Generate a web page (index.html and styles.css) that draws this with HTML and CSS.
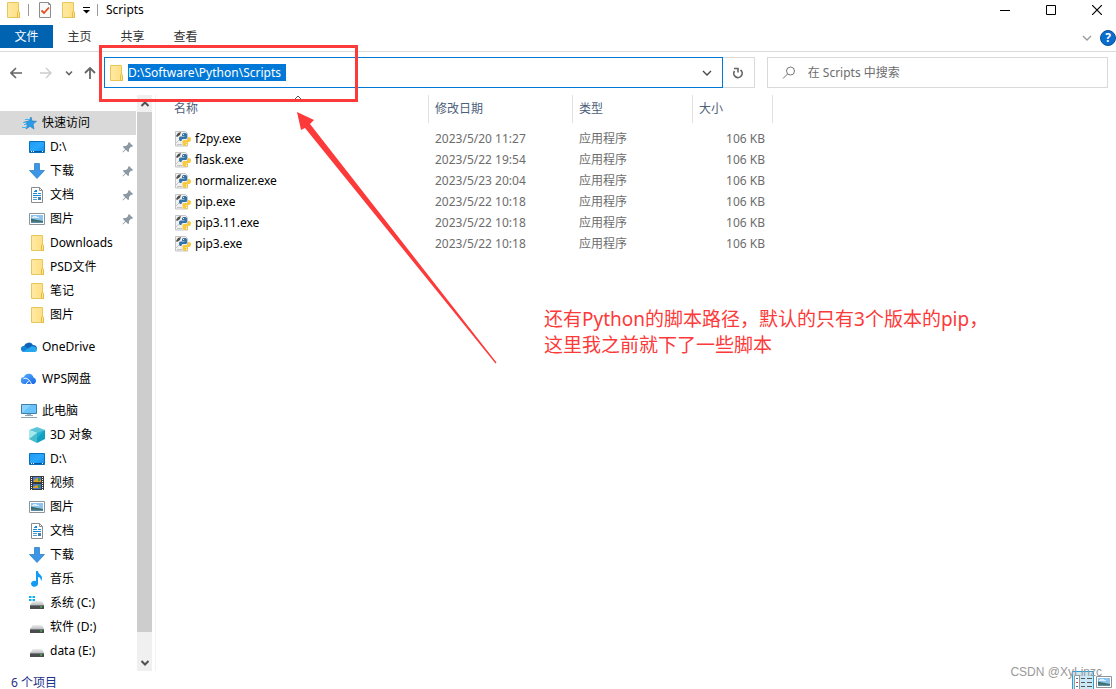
FILE: index.html
```html
<!DOCTYPE html>
<html lang="zh-CN">
  <head>
    <meta charset="UTF-8" />
    <meta name="viewport" content="width=device-width, initial-scale=1.0" />
    <title>Scripts</title>
    <link rel="stylesheet" href="styles.css" />
  </head>
  <body>
    <!-- 图标 -->
    <svg class="sprite" aria-hidden="true">
      <defs>
        <linearGradient id="blue" x1="0" y1="0" x2="1" y2="1">
          <stop offset="0" stop-color="#1b9bf5" />
          <stop offset="0.5" stop-color="#2aa8ff" />
          <stop offset="1" stop-color="#0d8ff0" />
        </linearGradient>
        <linearGradient id="gold" x1="0" y1="0" x2="1" y2="0">
          <stop offset="0" stop-color="#ffe9a2" />
          <stop offset="1" stop-color="#ffdf82" />
        </linearGradient>
        <linearGradient id="cloud" x1="0" y1="0" x2="1" y2="1">
          <stop offset="0" stop-color="#58b4ff" />
          <stop offset="1" stop-color="#1463e8" />
        </linearGradient>
        <linearGradient id="metal" x1="0" y1="0" x2="0" y2="1">
          <stop offset="0" stop-color="#eeeeee" />
          <stop offset="1" stop-color="#b9bdc0" />
        </linearGradient>
      </defs>
      <symbol id="folder" viewBox="0 0 16 16">
        <path d="M2.5.5h11v11l1 1v3h-12z" fill="url(#gold)" stroke="#e8c65c" />
        <path d="M12.5 15.5v-5l1-1.5 1 1.5v5z" fill="#ffe48e" stroke="#e3bb45" />
      </symbol>
      <symbol id="star" viewBox="0 0 16 16">
        <path d="M10 2l1 4 4.500.3-3.500 2.700 1 5-4-2.700-4 2.700 1.500-4.500L3.500 7l4.500-1z" fill="#2b9be8" stroke="#1678c2" stroke-width=".6" />
        <path d="M4 4.500h5M2 7.500h4M3 9.500h3M1 12.500h5" stroke="#49b2f2" />
      </symbol>
      <symbol id="desktop" viewBox="0 0 16 16">
        <path d="M.5 2.500h15v11H.5z" fill="url(#blue)" stroke="#0a6fbd" />
        <path d="M1 12.500h14" stroke="#06569b" />
        <path d="M2 12.500h1M4 12.500h1M13 12.500h1" stroke="#fff" />
      </symbol>
      <symbol id="download" viewBox="0 0 16 16">
        <path d="M5.500.5h5v7h5L8 15.500.5 7.500h5z" fill="#3b97e5" stroke="#2878c2" stroke-width=".7" />
      </symbol>
      <symbol id="doc" viewBox="0 0 16 16">
        <path d="M2.500.5h8l3 3v12h-11z" fill="#fff" stroke="#8b8b8b" />
        <path d="M10.500.5v3h3" fill="none" stroke="#8b8b8b" />
        <path d="M6 3.500h2M5 4.500h3M4 6.500h4M9 6.500h3M4 8.500h8" stroke="#1e88d8" />
        <path d="M4 10.500h4M4 12.500h4" stroke="#4f9ed4" />
        <path d="M9 10h3v3H9z" fill="#3d82b0" />
      </symbol>
      <symbol id="picture" viewBox="0 0 16 16">
        <path d="M.5 2.500h15v11H.5z" fill="#fff" stroke="#8f9499" />
        <path d="M2 4h12v8H2z" fill="#8cc3ef" />
        <path d="M4 5.500h4M3 6.500h7" stroke="#d9efff" />
        <path d="M2 7.500l4 1 8 1.500v2H2z" fill="#3c6d68" />
        <path d="M2 10.500l12 .5v1H2z" fill="#5d8ea8" />
      </symbol>
      <symbol id="onedrive" viewBox="0 0 16 16">
        <path d="M0 10.500A3.500 3.500 0 013 7a5 5 0 019-1 4 4 0 014 4z" fill="#0e62b8" />
        <path d="M0 10.500A3.500 3.500 0 013.500 7L11 12l-8 1A3 3 0 010 10.500z" fill="#1283d8" />
        <path d="M2 13l8-5.500c3-.8 6 .5 6 3A2.500 2.500 0 0113.500 13z" fill="#29a7ec" />
      </symbol>
      <symbol id="wps" viewBox="0 0 16 16">
        <path d="M3.500 13A3.500 3.500 0 013 6a5 5 0 019.500.5A3.500 3.500 0 0113 13z" fill="url(#cloud)" />
        <path d="M2.500 7.500c4-1 6 1.500 8 5.500M5 13l3-3.500" fill="none" stroke="#fff" />
      </symbol>
      <symbol id="pc" viewBox="0 0 16 16">
        <path d="M.5 1.500h15v9H.5z" fill="#69c3fb" stroke="#3f7fa8" />
        <path d="M1 10V2h9z" fill="#8bd3ff" />
        <path d="M6 11h4v1.500H6z" fill="#9eb4c4" />
        <path d="M0 14.500h16M4 12.500h8" stroke="#8aa3b5" />
      </symbol>
      <symbol id="cube" viewBox="0 0 16 16">
        <path d="M8 0l8 3-8 3-8-3z" fill="#5cc5d8" />
        <path d="M0 3l8 3v10l-8-4z" fill="#a4e8ec" />
        <path d="M16 3L8 6v10l8-4z" fill="#10a0c0" />
        <path d="M0 12l8-6v10z" fill="#48bccc" />
        <path d="M16 3l-8 8V6z" fill="#22b5d2" />
      </symbol>
      <symbol id="video" viewBox="0 0 16 16">
        <path d="M1 1h14v14H1z" fill="#3b3b3b" />
        <path d="M4 2h8v5H4z" fill="#597ed0" />
        <path d="M4 9h8v5H4z" fill="#4775c5" />
        <path d="M5 5l3-2 4 2v2H5zM4 12l4-2 2 3H4z" fill="#d8a32b" />
        <path d="M9 3h2v3H9zM9 10h2v3H9z" fill="#3f9652" />
        <path d="M2.500 2v13M13.500 2v13" stroke="#fff" stroke-dasharray="1 1" />
      </symbol>
      <symbol id="music" viewBox="0 0 16 16">
        <path d="M7 0h2c0 3 4 4 4 7 0 2-1 3-1 3 0-3-1.500-4-3-4v6.500A3.500 3 0 117 10z" fill="#129bf3" />
      </symbol>
      <symbol id="drive" viewBox="0 0 16 16">
        <path d="M4 6h9l2 4H1z" fill="url(#metal)" />
        <path d="M1 10h14v4H1z" fill="#4a4d4f" />
        <path d="M1 10.500h14" stroke="#777" />
        <path d="M11 12h2" stroke="#39e639" />
      </symbol>
      <symbol id="windrive" viewBox="0 0 16 16">
        <use href="#drive" />
        <path d="M0 1h2.500v2H0zM3.500 1H6v2H3.500zM0 4h2.500v2H0zM3.500 4H6v2H3.500z" fill="#10adef" />
      </symbol>
      <symbol id="pin" viewBox="0 0 12 12">
        <path d="M7 1l4 4-1 1-1-.3L7 8v2.500L6 11 3.800 8.800 1 11.500l-.5-.5 2.700-2.800L1 6l.5-1H4l2.300-2L6 2z" fill="#8c98a2" />
      </symbol>
      <symbol id="python" viewBox="0 0 16 16">
        <path d="M.5.5h10l2 2v12.500H.5z" fill="#f1f1f1" stroke="#c4c4c4" />
        <path d="M1 5l2-3 3-1-1 3-3 2z" fill="#4e4e4e" />
        <path d="M1 12l3-3M2 13.500h5" stroke="#c4c4c4" />
        <path d="M7 3.500C7 2.500 8 2 9.500 2S12 2.500 12 3.500v3c0 1-.8 1.500-1.500 1.500H8C7 8 6.500 8.800 6.500 10H5.500C4.300 10 4 8.800 4 7.500S4.500 5.500 5.500 5.500H9.500V5H7z" fill="#3572a5" />
        <path d="M13 6h1c1.300 0 2 1 2 2.500S15.300 11 14 11h-3.500v.5H13V13c0 1-1 2-2.500 2S7.500 14.300 7.500 13v-2.500C7.500 9.500 8.300 9 9.200 9H11.500C12.500 9 13 8.200 13 7.200z" fill="#f7ca3e" />
        <circle cx="8.500" cy="3.500" r=".6" fill="#fff" />
        <circle cx="11.500" cy="13.300" r=".6" fill="#fff" />
      </symbol>
      <symbol id="chevron" viewBox="0 0 10 10">
        <path d="M1 3l4 4 4-4" fill="none" stroke="currentColor" stroke-width="1.300" />
      </symbol>
      <symbol id="scroll-up" viewBox="0 0 10 10">
        <path d="M1.500 7L5 3.500 8.500 7" fill="none" stroke="currentColor" stroke-width="2" />
      </symbol>
      <symbol id="scroll-down" viewBox="0 0 10 10">
        <path d="M1.500 3L5 6.500 8.500 3" fill="none" stroke="currentColor" stroke-width="2" />
      </symbol>
    </svg>

    <!-- 标题栏 -->
    <header class="titlebar">
      <svg class="icon"><use href="#folder" /></svg>
      <span class="divider"></span>
      <svg class="icon" viewBox="0 0 16 16">
        <path d="M2.500.5h9l2 2v13h-11z" fill="#f8f8f8" stroke="#8d8d8d" />
        <path d="M11.500.5v2h2" fill="none" stroke="#8d8d8d" />
        <path d="M4.500 8.500L7 11l5-5.500" fill="none" stroke="#e0501f" stroke-width="1.800" />
      </svg>
      <svg class="icon"><use href="#folder" /></svg>
      <svg class="caret" viewBox="0 0 7 8">
        <path d="M0 1.500h7" stroke="#000" />
        <path d="M0 4h7L3.500 7.500z" />
      </svg>
      <span class="divider"></span>
      <h1>Scripts</h1>
      <div class="window-buttons">
        <button aria-label="最小化">
          <svg viewBox="0 0 10 10"><path d="M0 5.500h10" stroke="#000" /></svg>
        </button>
        <button aria-label="最大化">
          <svg viewBox="0 0 10 10"><path d="M.5.5h9v9h-9z" fill="none" stroke="#000" /></svg>
        </button>
        <button aria-label="关闭">
          <svg viewBox="0 0 10 10"><path d="M0 0l10 10M10 0L0 10" stroke="#000" stroke-width="1.200" /></svg>
        </button>
      </div>
    </header>

    <!-- 菜单 -->
    <div class="tabs">
      <button class="tab active">文件</button>
      <button class="tab">主页</button>
      <button class="tab">共享</button>
      <button class="tab">查看</button>
      <div class="tabs-right">
        <button aria-label="展开功能区"><svg class="arrow"><use href="#chevron" /></svg></button>
        <button class="help" aria-label="帮助">?</button>
      </div>
    </div>

    <!-- 地址栏 -->
    <div class="toolbar">
      <div class="history">
        <button class="back" aria-label="后退">
          <svg viewBox="0 0 12 12"><path d="M12 6H1M6 1L1 6l5 5" fill="none" stroke="currentColor" stroke-width="1.600" /></svg>
        </button>
        <button class="forward" aria-label="前进">
          <svg viewBox="0 0 12 12"><path d="M0 6h11M6 1l5 5-5 5" fill="none" stroke="currentColor" stroke-width="1.400" /></svg>
        </button>
        <button class="recent" aria-label="最近位置">
          <svg viewBox="0 0 12 12"><path d="M3 4.500l3 3 3-3" fill="none" stroke="currentColor" stroke-width="1.600" /></svg>
        </button>
        <button class="up" aria-label="上移">
          <svg viewBox="0 0 12 12"><path d="M6 12V1M1 6l5-5 5 5" fill="none" stroke="currentColor" stroke-width="1.800" /></svg>
        </button>
      </div>
      <div class="address">
        <div class="address-box">
          <svg class="icon"><use href="#folder" /></svg>
          <input class="path" type="text" aria-label="地址" value="D:\Software\Python\Scripts" />
          <button class="history-open" aria-label="以前的位置"><svg class="arrow"><use href="#chevron" /></svg></button>
          <div class="mark"></div>
        </div>
        <button class="refresh" aria-label="刷新">
          <svg viewBox="0 0 12 12">
            <path d="M8.500 3A4.200 4.200 0 112.500 4" fill="none" stroke="#666" stroke-width="1.700" />
            <path d="M2 1.500h4v4" fill="none" stroke="#666" stroke-width="1.600" />
          </svg>
        </button>
      </div>
      <div class="search">
        <svg viewBox="0 0 14 14">
          <circle cx="8.500" cy="5" r="4" fill="none" stroke="#777" />
          <path d="M5.500 8L1 12.500" stroke="#777" />
        </svg>
        <input type="text" aria-label="搜索" placeholder="在 Scripts 中搜索" />
      </div>
    </div>

    <main>
      <!-- 导航窗格 -->
      <nav class="sidebar">
        <a class="root selected" href="#"><svg class="icon"><use href="#star" /></svg>快速访问</a>
        <a href="#"><svg class="icon"><use href="#desktop" /></svg>D:\<svg class="pin"><use href="#pin" /></svg></a>
        <a href="#"><svg class="icon"><use href="#download" /></svg>下载<svg class="pin"><use href="#pin" /></svg></a>
        <a href="#"><svg class="icon"><use href="#doc" /></svg>文档<svg class="pin"><use href="#pin" /></svg></a>
        <a href="#"><svg class="icon"><use href="#picture" /></svg>图片<svg class="pin"><use href="#pin" /></svg></a>
        <a href="#"><svg class="icon"><use href="#folder" /></svg>Downloads</a>
        <a href="#"><svg class="icon"><use href="#folder" /></svg>PSD文件</a>
        <a href="#"><svg class="icon"><use href="#folder" /></svg>笔记</a>
        <a href="#"><svg class="icon"><use href="#folder" /></svg>图片</a>
        <a class="root" href="#"><svg class="icon"><use href="#onedrive" /></svg>OneDrive</a>
        <a class="root" href="#"><svg class="icon"><use href="#wps" /></svg>WPS网盘</a>
        <a class="root" href="#"><svg class="icon"><use href="#pc" /></svg>此电脑</a>
        <a href="#"><svg class="icon"><use href="#cube" /></svg>3D 对象</a>
        <a href="#"><svg class="icon"><use href="#desktop" /></svg>D:\</a>
        <a href="#"><svg class="icon"><use href="#video" /></svg>视频</a>
        <a href="#"><svg class="icon"><use href="#picture" /></svg>图片</a>
        <a href="#"><svg class="icon"><use href="#doc" /></svg>文档</a>
        <a href="#"><svg class="icon"><use href="#download" /></svg>下载</a>
        <a href="#"><svg class="icon"><use href="#music" /></svg>音乐</a>
        <a href="#"><svg class="icon"><use href="#windrive" /></svg>系统 (C:)</a>
        <a href="#"><svg class="icon"><use href="#drive" /></svg>软件 (D:)</a>
        <a href="#"><svg class="icon"><use href="#drive" /></svg>data (E:)</a>
      </nav>
      <div class="scrollbar">
        <button aria-label="向上滚动"><svg class="arrow"><use href="#scroll-up" /></svg></button>
        <div class="track"><div class="thumb"></div></div>
        <button aria-label="向下滚动"><svg class="arrow"><use href="#scroll-down" /></svg></button>
      </div>

      <!-- 文件列表 -->
      <section class="content">
        <table>
          <thead>
            <tr>
              <th class="name">名称<svg class="sort" viewBox="0 0 8 5"><path d="M.5 4.500L4 1l3.500 3.500" fill="none" stroke="#555" /></svg></th>
              <th class="date">修改日期</th>
              <th class="type">类型</th>
              <th class="size">大小</th>
            </tr>
          </thead>
          <tbody>
            <tr><td><svg class="icon"><use href="#python" /></svg>f2py.exe</td><td>2023/5/20 11:27</td><td>应用程序</td><td>106 KB</td></tr>
            <tr><td><svg class="icon"><use href="#python" /></svg>flask.exe</td><td>2023/5/22 19:54</td><td>应用程序</td><td>106 KB</td></tr>
            <tr><td><svg class="icon"><use href="#python" /></svg>normalizer.exe</td><td>2023/5/23 20:04</td><td>应用程序</td><td>106 KB</td></tr>
            <tr><td><svg class="icon"><use href="#python" /></svg>pip.exe</td><td>2023/5/22 10:18</td><td>应用程序</td><td>106 KB</td></tr>
            <tr><td><svg class="icon"><use href="#python" /></svg>pip3.11.exe</td><td>2023/5/22 10:18</td><td>应用程序</td><td>106 KB</td></tr>
            <tr><td><svg class="icon"><use href="#python" /></svg>pip3.exe</td><td>2023/5/22 10:18</td><td>应用程序</td><td>106 KB</td></tr>
          </tbody>
        </table>
        <svg class="pointer" viewBox="0 0 200 252">
          <path d="M0 0l17 8-4 4 186.500 238.500-1 1L8 16l-4 2z" fill="#fd3a3a" />
        </svg>
        <p class="note">还有Python的脚本路径，默认的只有3个版本的pip，<br />这里我之前就下了一些脚本</p>
      </section>
    </main>

    <!-- 状态栏 -->
    <footer class="status">
      <span>6 个项目</span>
      <div class="views">
        <button class="view active" aria-label="详细信息">
          <svg viewBox="0 0 18 15">
            <path d="M.5.500h5v14h-5z" fill="#fff" stroke="#9a9a9a" />
            <path d="M2 3.500h2M2 11.500h2" stroke="#3b78b5" />
            <path d="M2 7.500h2" stroke="#c44" />
            <path d="M7 3.500h4M13 3.500h5M7 7.500h4M13 7.500h5M7 11.500h4M13 11.500h5" stroke="#555" />
          </svg>
        </button>
        <button class="view" aria-label="大图标"><svg class="icon"><use href="#picture" /></svg></button>
      </div>
      <div class="watermark">CSDN @XyLinzc</div>
    </footer>
  </body>
</html>
```
FILE: styles.css
```css
* {
  margin: 0;
  padding: 0;
  box-sizing: border-box;
}
body {
  display: flex;
  flex-direction: column;
  height: 100vh;
  overflow: hidden;
  background: #fff;
  color: #000;
  font: 12px/16px "Noto Sans", "Noto Sans CJK SC", sans-serif;
}
button,
input {
  border: 0;
  outline: 0;
  background: none;
  color: inherit;
  font: inherit;
}
button {
  display: flex;
  align-items: center;
  justify-content: center;
}
a {
  color: inherit;
  text-decoration: none;
}
svg {
  flex: none;
}
.sprite {
  position: absolute;
  width: 0;
  height: 0;
}
.icon {
  width: 16px;
  height: 16px;
}
.arrow {
  width: 10px;
  height: 10px;
}

/* title bar */
.titlebar {
  display: flex;
  align-items: center;
  gap: 7px;
  height: 25px;
  padding: 0 0 5px 5px;
}
.titlebar h1 {
  font-size: 12px;
  font-weight: 400;
}
.divider {
  width: 1px;
  height: 12px;
  margin-right: 1px;
  background: #999;
}
.caret {
  width: 7px;
  height: 8px;
}
.window-buttons {
  display: flex;
  margin: 0 -4px 0 auto;
}
.window-buttons button {
  width: 46px;
  height: 20px;
}
.window-buttons svg {
  width: 10px;
  height: 10px;
}

/* ribbon tabs */
.tabs {
  display: flex;
  align-items: flex-start;
  height: 27px;
  border-bottom: 1px solid #dadada;
}
.tab {
  width: 53px;
  height: 23px;
  color: #333;
}
.tab.active {
  background: #0063b1;
  color: #fff;
}
.tabs-right {
  display: flex;
  align-items: center;
  gap: 8px;
  height: 25px;
  margin-left: auto;
  color: #999;
}
.help {
  width: 16px;
  height: 16px;
  border: 1px solid #0a529b;
  border-radius: 50%;
  background: #0a6cce;
  color: #fff;
  font-weight: 700;
}

/* address bar */
.toolbar {
  display: flex;
  height: 43px;
  padding: 5px 8px 7px 0;
}
.history {
  display: flex;
  margin-right: 2px;
  color: #666;
}
.history svg {
  width: 12px;
  height: 12px;
}
.back {
  width: 32px;
}
.forward {
  width: 28px;
  color: #ccc;
}
.recent {
  width: 18px;
}
.up {
  width: 24px;
}
.address {
  display: flex;
  flex: 2;
  margin-right: 12px;
}
.address-box {
  position: relative;
  display: flex;
  align-items: center;
  flex: 1;
  padding-left: 3px;
  border: 1px solid #0078d7;
}
.path {
  width: 158px;
  height: 17px;
  margin-left: 4px;
  background: #0078d7;
  color: #fff;
}
.history-open {
  width: 30px;
  height: 29px;
  margin-left: auto;
  color: #444;
}
.mark {
  position: absolute;
  z-index: 1;
  top: -13px;
  left: -6px;
  width: 259px;
  height: 57px;
  border: 3px solid #fd3a3a;
}
.refresh {
  width: 32px;
  border: 1px solid #d9d9d9;
  border-left: 0;
}
.refresh svg {
  width: 12px;
  height: 12px;
}
.search {
  display: flex;
  align-items: center;
  gap: 12px;
  flex: 1;
  padding-left: 14px;
  border: 1px solid #d9d9d9;
}
.search svg {
  width: 14px;
  height: 14px;
}
.search input {
  flex: 1;
  min-width: 0;
}
.search input::placeholder {
  color: #6d6d6d;
}

/* navigation pane */
main {
  display: flex;
  flex: 1;
  min-height: 0;
}
.sidebar {
  width: 137px;
  padding: 16px 1px 0 0;
  overflow: hidden;
}
.sidebar a {
  display: flex;
  align-items: center;
  gap: 5px;
  height: 24px;
  padding: 0 2px 0 29px;
}
.sidebar .root {
  margin-top: 8px;
  padding-left: 21px;
}
.sidebar .selected {
  margin-top: 0;
  background: #d9d9d9;
}
.pin {
  width: 12px;
  height: 12px;
  margin-left: auto;
}
.scrollbar {
  display: flex;
  flex-direction: column;
  width: 15px;
  background: #f0f0f0;
}
.scrollbar button {
  height: 17px;
  color: #505050;
}
.track {
  flex: 1;
}
.thumb {
  height: 96%;
  background: #cdcdcd;
}

/* file list */
.content {
  position: relative;
  flex: 1;
  margin-left: 3px;
  border-left: 1px solid #f3f3f3;
}
table {
  table-layout: fixed;
  width: 617px;
  border-collapse: separate;
  border-spacing: 0;
}
th {
  height: 28px;
  padding-left: 6px;
  border-right: 1px solid #e2e2e2;
  color: #4c607a;
  font-weight: 400;
  text-align: left;
}
.name {
  position: relative;
  width: 273px;
  padding-left: 18px;
}
.date {
  width: 144px;
}
.type {
  width: 120px;
}
.sort {
  position: absolute;
  top: 0;
  left: 138px;
  width: 8px;
  height: 5px;
}
tbody::before {
  content: "";
  display: block;
  height: 5px;
}
td {
  height: 21px;
  padding-left: 6px;
  color: #6d6d6d;
}
td:first-child {
  display: flex;
  align-items: center;
  gap: 4px;
  padding-left: 19px;
  color: #000;
}
td:last-child {
  padding-right: 8px;
  text-align: right;
}
.pointer {
  position: absolute;
  top: 17px;
  left: 141px;
  width: 200px;
  height: 252px;
}
.note {
  position: absolute;
  top: 211px;
  left: 388px;
  color: #fd3a3a;
  font-size: 19px;
  line-height: 26px;
  white-space: nowrap;
}

/* status bar */
.status {
  position: relative;
  display: flex;
  align-items: flex-start;
  justify-content: space-between;
  height: 18px;
  padding-left: 11px;
  color: #1e3287;
}
.status span {
  padding-top: 4px;
}
.views {
  display: flex;
  padding-right: 2px;
}
.view {
  width: 20px;
  height: 22px;
}
.view.active {
  width: 22px;
  border: 1px solid #26a0da;
  background: #cbe8f6;
}
.view.active svg {
  width: 18px;
  height: 15px;
}
.watermark {
  position: absolute;
  right: 14px;
  top: -7px;
  color: #999;
  font-family: "Liberation Sans", sans-serif;
}
```
